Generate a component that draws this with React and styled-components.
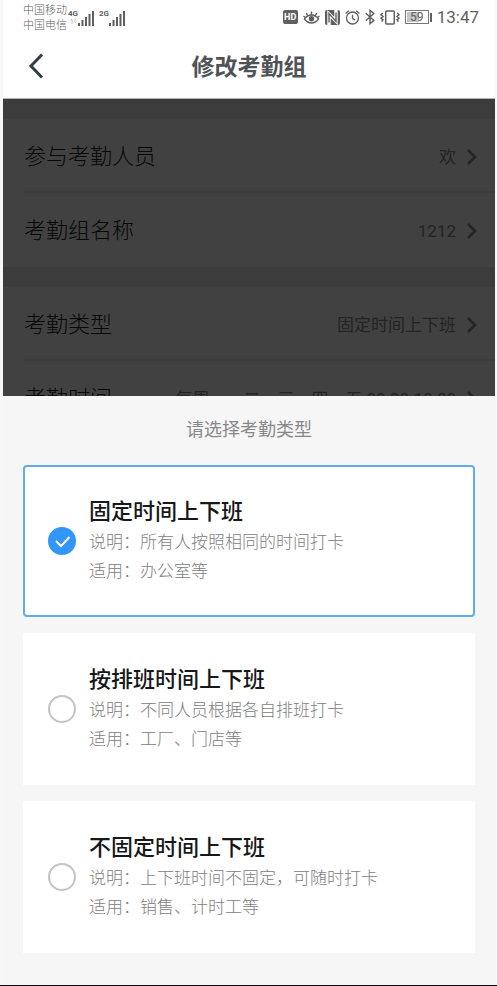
import { useState } from "react";
import styled, { createGlobalStyle } from "styled-components";

const GlobalStyle = createGlobalStyle`
  * {
    box-sizing: border-box;
  }

  body {
    margin: 0;
    background: #f5f7f9;
    font-family: Roboto, "Noto Sans CJK SC", sans-serif;
  }
`;

const settings = [
  [
    { label: "参与考勤人员", value: "欢" },
    { label: "考勤组名称", value: "1212" },
  ],
  [
    { label: "考勤类型", value: "固定时间上下班" },
    { label: "考勤时间", value: "每周一、二、三、四、五 09:00-18:00" },
  ],
];

const types = [
  {
    id: "fixed",
    title: "固定时间上下班",
    desc: "说明：所有人按照相同的时间打卡",
    usage: "适用：办公室等",
  },
  {
    id: "shift",
    title: "按排班时间上下班",
    desc: "说明：不同人员根据各自排班打卡",
    usage: "适用：工厂、门店等",
  },
  {
    id: "free",
    title: "不固定时间上下班",
    desc: "说明：上下班时间不固定，可随时打卡",
    usage: "适用：销售、计时工等",
  },
];

const Screen = styled.div`
  display: flex;
  flex-direction: column;
  height: 100vh;
  padding: 0 2px 0 3px;
  border-bottom: 1px solid #0b0b0f;
`;

const Header = styled.header`
  flex: none;
  background: #fff;
  border-bottom: 1px solid #b5b5b5;
`;

/* Status bar */
const StatusBar = styled.div`
  display: flex;
  align-items: center;
  justify-content: space-between;
  height: 34px;
  padding: 0 16px 0 20px;
  color: #5f5f5f;
`;

const StatusGroup = styled.div`
  display: flex;
  align-items: center;
  gap: ${({ $gap }) => $gap}px;

  svg {
    display: block;
    flex: none;
  }
`;

const Carriers = styled.div`
  padding-top: 2px;
  font-size: 11px;
  line-height: 15px;
  font-weight: 300;
  white-space: nowrap;
`;

const Signal = styled.div`
  display: flex;
  align-items: flex-end;
  margin-right: 3px;
`;

const Network = styled.div`
  display: flex;
  flex-direction: column;
  align-items: center;
  width: 10px;
  height: 17px;
  font-size: 8px;
  line-height: 9px;
  font-weight: 700;
`;

const HdBadge = styled.span`
  width: 15px;
  height: 14px;
  border-radius: 2px;
  background: #5f5f5f;
  color: #fff;
  font-size: 9px;
  line-height: 14px;
  font-weight: 700;
  text-align: center;
`;

const Battery = styled.span`
  display: flex;
  align-items: center;

  &::after {
    content: "";
    width: 2px;
    height: 9px;
    margin-left: 1px;
    background: #5f5f5f;
  }
`;

const BatteryLevel = styled.span`
  width: 24px;
  height: 14px;
  border: 1px solid #777;
  box-shadow: inset 0 0 0 1px #fff;
  background: linear-gradient(to right, #c4c4c4 59%, #fff 59%);
  font-size: 12px;
  line-height: 12px;
  text-align: center;
`;

const Clock = styled.time`
  font-size: 17px;
  line-height: 20px;
`;

/* Navigation */
const Nav = styled.nav`
  display: grid;
  grid-template-columns: 1fr auto 1fr;
  align-items: center;
  height: 64px;
  padding: 0 20px;
`;

const BackButton = styled.button`
  justify-self: start;
  display: flex;
  padding: 4px;
  border: none;
  background: none;
  color: #333c46;
  cursor: pointer;
`;

const PageTitle = styled.h1`
  margin: 0;
  padding-top: 4px;
  color: #505356;
  font-size: 23px;
  line-height: 32px;
  font-weight: 700;
`;

/* Settings behind the sheet */
const Settings = styled.main`
  position: relative;
  flex: 1;
  min-height: 0;
  overflow: hidden;
  background: #ececec;
`;

const Group = styled.section`
  margin-top: 20px;
  padding-left: 20px;
  background: #fff;
`;

const SettingRow = styled.button`
  display: flex;
  align-items: center;
  justify-content: space-between;
  width: 100%;
  height: 74px;
  padding: 4px 18px 0 1px;
  border: none;
  border-bottom: 2px solid #ececec;
  background: none;
  font-family: inherit;
  text-align: left;
  white-space: nowrap;

  &:last-child {
    border-bottom-color: transparent;
  }
`;

const RowLabel = styled.span`
  color: #222;
  font-size: 22px;
  line-height: 32px;
  font-weight: 300;
`;

const RowValue = styled.span`
  display: flex;
  align-items: center;
  gap: 10px;
  color: #8c8c8c;
  font-size: 17px;
  line-height: 24px;
`;

const Backdrop = styled.div`
  position: absolute;
  inset: 0;
  background: rgba(0, 0, 0, 0.745);
`;

/* Bottom sheet */
const Sheet = styled.form`
  flex: none;
  padding: 20px 20px 32px;
  background: #f6f6f6;
`;

const SheetTitle = styled.h2`
  margin: 0 0 21px;
  color: #88888c;
  font-size: 18px;
  line-height: 28px;
  font-weight: 400;
  text-align: center;
`;

const Options = styled.div`
  display: flex;
  flex-direction: column;
  gap: 16px;
`;

const OptionCard = styled.label`
  display: flex;
  align-items: center;
  gap: 13px;
  min-height: 152px;
  padding: 0 22px 0 23px;
  border: 2px solid ${({ $active }) => ($active ? "#62aaee" : "#fff")};
  border-radius: ${({ $active }) => ($active ? 4 : 0)}px;
  background: #fff;
  cursor: pointer;
`;

const RadioBox = styled.span`
  display: grid;
  flex: none;

  input,
  svg {
    grid-area: 1 / 1;
  }

  svg {
    pointer-events: none;
  }
`;

const Radio = styled.input`
  appearance: none;
  width: 28px;
  height: 28px;
  margin: 0;
  border: 2px solid #c4c4c4;
  border-radius: 50%;
  background: #fff;
  cursor: pointer;

  &:checked {
    border-color: #3296fa;
    background: #3296fa;
  }
`;

const OptionText = styled.span`
  display: flex;
  flex-direction: column;
  padding-bottom: 1px;
`;

const OptionTitle = styled.span`
  color: #16181a;
  font-size: 22px;
  line-height: 32px;
  font-weight: 500;
`;

const OptionDesc = styled.span`
  color: #808080;
  font-size: 17px;
  line-height: 29px;
  font-weight: 300;
`;

const SignalBars = () => (
  <svg width="17" height="16" viewBox="0 0 17 16" fill="#5f5f5f">
    <rect x="0" y="13" width="2" height="3" />
    <rect x="3.5" y="10" width="2" height="6" />
    <rect x="7" y="7" width="2" height="9" />
    <rect x="10.5" y="4" width="2" height="12" />
    <rect x="14" y="1" width="2" height="15" />
  </svg>
);

const DataArrows = () => (
  <svg width="7" height="6" viewBox="0 0 7 6" fill="none" stroke="#c8c8c8">
    <path d="M2 6V1L.5 2.5M5 0v5l1.5-1.5" />
  </svg>
);

const EyeIcon = () => (
  <svg width="17" height="16" viewBox="0 0 17 16" fill="none" stroke="#5f5f5f" strokeWidth="1.4">
    <path d="M1.500 10C3.500 7.200 5.800 6 8.500 6s5 1.200 7 4c-2 2.700-4.300 4-7 4s-5-1.300-7-4z" />
    <circle cx="8.500" cy="9.800" r="2" fill="#5f5f5f" />
    <path d="M8.500 6V2.500M4.700 6.700L3.200 4M12.300 6.700L13.800 4M2.500 8.500L.5 7M14.500 8.500l2-1.500" />
  </svg>
);

const NfcIcon = () => (
  <svg width="15" height="15" viewBox="0 0 15 15">
    <rect width="15" height="15" rx="2" fill="#5f5f5f" />
    <path d="M4 15V4l7 7V0" fill="none" stroke="#fff" strokeWidth="3.400" />
    <path d="M4 12.500V3.500l7 8V2.500" fill="none" stroke="#5f5f5f" strokeWidth="1.400" />
  </svg>
);

const AlarmIcon = () => (
  <svg width="15" height="15" viewBox="0 0 15 15" fill="none" stroke="#5f5f5f" strokeWidth="1.300">
    <circle cx="7.500" cy="8" r="6" />
    <path d="M7.500 4.800v3.500l2.500 1.700M.6 3.600L3.800.8M14.400 3.600L11.200.8" />
  </svg>
);

const BluetoothIcon = () => (
  <svg width="10" height="16" viewBox="0 0 10 16" fill="none" stroke="#5f5f5f" strokeWidth="1.400">
    <path d="M.8 4.300l8 7.200L5 14.700V1.300l3.800 3.200-8 7.200" />
  </svg>
);

const VibrateIcon = () => (
  <svg width="20" height="15" viewBox="0 0 20 15" fill="none" stroke="#5f5f5f" strokeWidth="1.500">
    <rect x="5.700" y="1" width="8.600" height="13" rx="1" />
    <path d="M2.800 3L1 4.800l2 1.700-2 1.700 2 1.700-1.500 1.600M17.200 3L19 4.800l-2 1.700 2 1.700-2 1.700 1.500 1.600" />
  </svg>
);

const BackIcon = () => (
  <svg width="18" height="28" viewBox="0 0 18 28" fill="none" stroke="currentColor" strokeWidth="3">
    <path d="M15 2.500L4 14l11 11.500" />
  </svg>
);

const ArrowIcon = () => (
  <svg width="11" height="18" viewBox="0 0 11 18" fill="none" stroke="currentColor" strokeWidth="2.600">
    <path d="M2 2l7 7-7 7" />
  </svg>
);

const CheckIcon = () => (
  <svg width="28" height="28" viewBox="0 0 28 28" fill="none" stroke="#fff" strokeWidth="2">
    <path d="M8 14l5 5 8.500-9" />
  </svg>
);

const StatusRow = () => (
  <StatusBar>
    <StatusGroup $gap={1}>
      <Carriers>
        <div>中国移动</div>
        <div>中国电信</div>
      </Carriers>
      <Signal>
        <Network>
          4G
          <DataArrows />
        </Network>
        <SignalBars />
      </Signal>
      <Signal>
        <Network>2G</Network>
        <SignalBars />
      </Signal>
    </StatusGroup>
    <StatusGroup $gap={5}>
      <HdBadge>HD</HdBadge>
      <EyeIcon />
      <NfcIcon />
      <AlarmIcon />
      <BluetoothIcon />
      <VibrateIcon />
      <Battery>
        <BatteryLevel>59</BatteryLevel>
      </Battery>
      <Clock>13:47</Clock>
    </StatusGroup>
  </StatusBar>
);

const App = () => {
  const [selected, setSelected] = useState("fixed");

  return (
    <Screen>
      <GlobalStyle />
      <Header>
        <StatusRow />
        <Nav>
          <BackButton type="button" aria-label="返回">
            <BackIcon />
          </BackButton>
          <PageTitle>修改考勤组</PageTitle>
        </Nav>
      </Header>

      <Settings>
        {settings.map((rows, index) => (
          <Group key={index}>
            {rows.map((row) => (
              <SettingRow key={row.label} type="button">
                <RowLabel>{row.label}</RowLabel>
                <RowValue>
                  {row.value}
                  <ArrowIcon />
                </RowValue>
              </SettingRow>
            ))}
          </Group>
        ))}
        <Backdrop />
      </Settings>

      <Sheet>
        <SheetTitle>请选择考勤类型</SheetTitle>
        <Options>
          {types.map((type) => (
            <OptionCard key={type.id} $active={selected === type.id}>
              <RadioBox>
                <Radio
                  type="radio"
                  name="attendance-type"
                  value={type.id}
                  checked={selected === type.id}
                  onChange={() => setSelected(type.id)}
                />
                {selected === type.id && <CheckIcon />}
              </RadioBox>
              <OptionText>
                <OptionTitle>{type.title}</OptionTitle>
                <OptionDesc>{type.desc}</OptionDesc>
                <OptionDesc>{type.usage}</OptionDesc>
              </OptionText>
            </OptionCard>
          ))}
        </Options>
      </Sheet>
    </Screen>
  );
};

export default App;
